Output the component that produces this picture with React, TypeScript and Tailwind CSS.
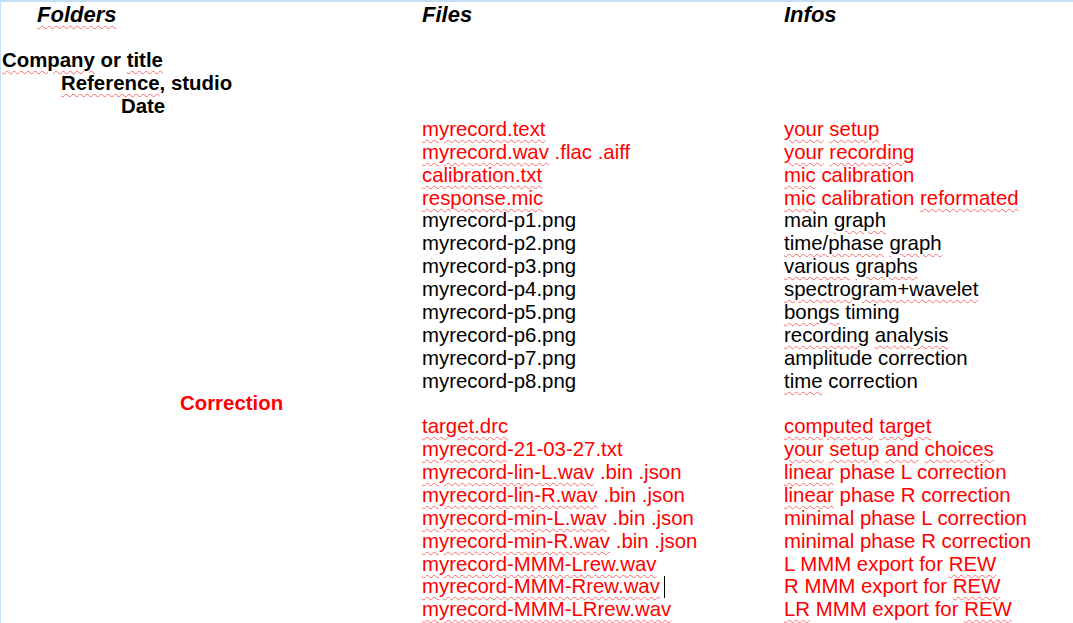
type Seg = string | [string];

interface RowProps {
  folder?: Seg[];
  folderPad?: string;
  folderRed?: boolean;
  file?: Seg[];
  info?: Seg[];
  red?: boolean;
  cursor?: boolean;
}

// spell-check squiggle, like the word processor draws it
const Sp = ({ children }: { children: string }) => (
  <span className="underline decoration-wavy decoration-[#ff6b6b] decoration-1 underline-offset-[3px]">
    {children}
  </span>
);

const Text = ({ segs }: { segs?: Seg[] }) => (
  <>
    {segs?.map((s, i) =>
      Array.isArray(s) ? <Sp key={i}>{s[0]}</Sp> : <span key={i}>{s}</span>
    )}
  </>
);

const Row = ({ folder, folderPad = "pl-[1px]", folderRed, file, info, red, cursor }: RowProps) => (
  <div className="grid grid-cols-[421px_362px_1fr] h-[22.88px] whitespace-pre">
    <div className={`${folderPad} font-bold ${folderRed ? "text-[#ff0000]" : "text-black"}`}>
      <Text segs={folder} />
    </div>
    <div className={red ? "text-[#ff0000]" : "text-black"}>
      <Text segs={file} />
      {cursor && <span className="inline-block w-px h-[22px] bg-black align-[-5px] ml-[4px]"></span>}
    </div>
    <div className={red ? "text-[#ff0000]" : "text-black"}>
      <Text segs={info} />
    </div>
  </div>
);

const App = () => {
  return (
    <div className="w-[1073px] h-[623px] overflow-hidden bg-white border-t-2 border-l border-[#c4def4] pt-[1.5px] font-['Liberation_Sans',Arial,sans-serif] text-[20.4px] leading-[22.88px]">
      {/* Header */}
      <div className="grid grid-cols-[421px_362px_1fr] h-[22.88px] font-bold italic text-black text-[22px]">
        <div className="pl-[36px]"><Sp>Folders</Sp></div>
        <div>Files</div>
        <div>Infos</div>
      </div>
      <div className="h-[22.88px]"></div>

      <Row folder={[["Company"], " or ", ["title"]]} />
      <Row folder={[["Reference"], ", studio"]} folderPad="pl-[60px]" />
      <Row folder={["Date"]} folderPad="pl-[120px]" />

      <Row red file={[["myrecord.text"]]} info={[["your"], " ", ["setup"]]} />
      <Row red file={[["myrecord.wav"], " .flac .aiff"]} info={[["your"], " ", ["recording"]]} />
      <Row red file={[["calibration.txt"]]} info={[["mic"], " calibration"]} />
      <Row red file={[["response.mic"]]} info={[["mic"], " calibration ", ["reformated"]]} />
      <Row file={["myrecord-p1.png"]} info={["main ", ["graph"]]} />
      <Row file={["myrecord-p2.png"]} info={[["time/phase"], " ", ["graph"]]} />
      <Row file={["myrecord-p3.png"]} info={[["various"], " ", ["graphs"]]} />
      <Row file={["myrecord-p4.png"]} info={[["spectrogram+wavelet"]]} />
      <Row file={["myrecord-p5.png"]} info={[["bongs"], " timing"]} />
      <Row file={["myrecord-p6.png"]} info={[["recording"], " ", ["analysis"]]} />
      <Row file={["myrecord-p7.png"]} info={["amplitude correction"]} />
      <Row file={["myrecord-p8.png"]} info={[["time"], " correction"]} />

      <Row folder={["Correction"]} folderPad="pl-[179px]" folderRed />

      <Row red file={[["target.drc"]]} info={[["computed"], " ", ["target"]]} />
      <Row red file={[["myrecord"], "-21-03-27.txt"]} info={[["your"], " ", ["setup"], " ", ["and"], " ", ["choices"]]} />
      <Row red file={[["myrecord-lin-L.wav"], " .bin .json"]} info={[["linear"], " phase L correction"]} />
      <Row red file={[["myrecord-lin-R.wav"], " .bin .json"]} info={[["linear"], " phase R correction"]} />
      <Row red file={[["myrecord-min-L.wav"], " .bin .json"]} info={["minimal phase L correction"]} />
      <Row red file={[["myrecord-min-R.wav"], " .bin .json"]} info={["minimal phase R correction"]} />
      <Row red file={[["myrecord-MMM-Lrew.wav"]]} info={["L MMM export for ", ["REW"]]} />
      <Row red cursor file={[["myrecord-MMM-Rrew.wav"]]} info={["R MMM export for ", ["REW"]]} />
      <Row red file={[["myrecord-MMM-LRrew.wav"]]} info={[["LR"], " MMM export for ", ["REW"]]} />
    </div>
  );
};

export default App;
